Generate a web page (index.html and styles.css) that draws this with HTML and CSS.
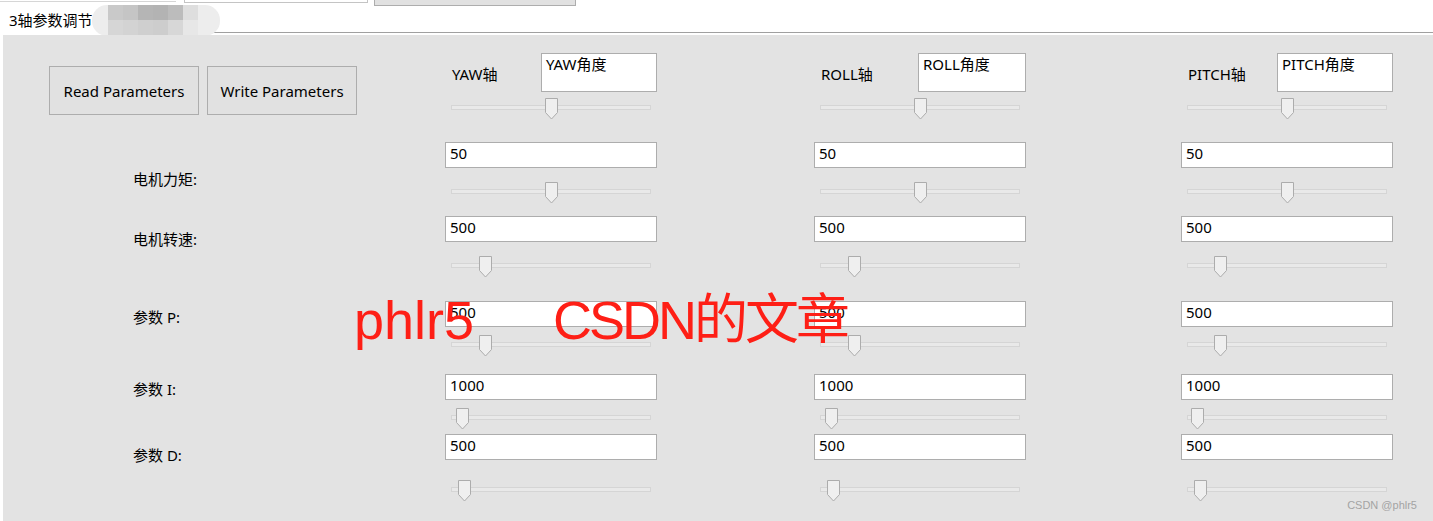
FILE: index.html
```html
<!DOCTYPE html>
<html lang="zh">
<head>
<meta charset="utf-8">
<title>3轴参数调节</title>
<link rel="stylesheet" href="styles.css">
</head>
<body>
<div class="top">
  <div class="strip"><div class="s1"></div><div class="s2"></div><div class="s3"></div></div>
  <div class="tabrow">
    <div class="tab">3轴参数调节</div>
    <div class="tabfill"></div>
  </div>
  <div class="blur">
    <div class="mcol"><i class="c a1"></i><i class="c b1"></i></div>
    <div class="mcol"><i class="c a2"></i><i class="c b2"></i></div>
    <div class="mcol"><i class="c a3"></i><i class="c b3"></i></div>
    <div class="mcol"><i class="c a4"></i><i class="c b4"></i></div>
    <div class="mcol"><i class="c a5"></i><i class="c b5"></i></div>
    <div class="mcol"><i class="c a6"></i><i class="c b6"></i></div>
  </div>
</div>

<div class="panel">
  <div class="leftcol">
    <div class="btns">
      <button class="btn">Read Parameters</button>
      <button class="btn">Write Parameters</button>
    </div>
    <div class="lbl l1">电机力矩:</div>
    <div class="lbl l2">电机转速:</div>
    <div class="lbl l3">参数 P:</div>
    <div class="lbl l4">参数 I:</div>
    <div class="lbl l5">参数 D:</div>
  </div>

  <div class="axis yaw">
    <div class="head"><span class="axlbl">YAW轴</span><div class="angle">YAW角度</div></div>
    <div class="slider r0"><div class="track"></div><svg class="thumb" style="left:100px" viewBox="0 0 13 22"><path d="M0.5 0.5H12.5V14.5L6.5 21L0.5 14.5Z"/></svg></div>
    <div class="tb t1">50</div>
    <div class="slider r1"><div class="track"></div><svg class="thumb" style="left:100px" viewBox="0 0 13 22"><path d="M0.5 0.5H12.5V14.5L6.5 21L0.5 14.5Z"/></svg></div>
    <div class="tb t2">500</div>
    <div class="slider r2"><div class="track"></div><svg class="thumb" style="left:34px" viewBox="0 0 13 22"><path d="M0.5 0.5H12.5V14.5L6.5 21L0.5 14.5Z"/></svg></div>
    <div class="tb t3">500</div>
    <div class="slider r3"><div class="track"></div><svg class="thumb" style="left:34px" viewBox="0 0 13 22"><path d="M0.5 0.5H12.5V14.5L6.5 21L0.5 14.5Z"/></svg></div>
    <div class="tb t4">1000</div>
    <div class="slider r4"><div class="track"></div><svg class="thumb" style="left:11px" viewBox="0 0 13 22"><path d="M0.5 0.5H12.5V14.5L6.5 21L0.5 14.5Z"/></svg></div>
    <div class="tb t5">500</div>
    <div class="slider r5"><div class="track"></div><svg class="thumb" style="left:13px" viewBox="0 0 13 22"><path d="M0.5 0.5H12.5V14.5L6.5 21L0.5 14.5Z"/></svg></div>
  </div>

  <div class="axis roll">
    <div class="head"><span class="axlbl">ROLL轴</span><div class="angle narrow">ROLL角度</div></div>
    <div class="slider r0"><div class="track"></div><svg class="thumb" style="left:100px" viewBox="0 0 13 22"><path d="M0.5 0.5H12.5V14.5L6.5 21L0.5 14.5Z"/></svg></div>
    <div class="tb t1">50</div>
    <div class="slider r1"><div class="track"></div><svg class="thumb" style="left:100px" viewBox="0 0 13 22"><path d="M0.5 0.5H12.5V14.5L6.5 21L0.5 14.5Z"/></svg></div>
    <div class="tb t2">500</div>
    <div class="slider r2"><div class="track"></div><svg class="thumb" style="left:34px" viewBox="0 0 13 22"><path d="M0.5 0.5H12.5V14.5L6.5 21L0.5 14.5Z"/></svg></div>
    <div class="tb t3">500</div>
    <div class="slider r3"><div class="track"></div><svg class="thumb" style="left:34px" viewBox="0 0 13 22"><path d="M0.5 0.5H12.5V14.5L6.5 21L0.5 14.5Z"/></svg></div>
    <div class="tb t4">1000</div>
    <div class="slider r4"><div class="track"></div><svg class="thumb" style="left:11px" viewBox="0 0 13 22"><path d="M0.5 0.5H12.5V14.5L6.5 21L0.5 14.5Z"/></svg></div>
    <div class="tb t5">500</div>
    <div class="slider r5"><div class="track"></div><svg class="thumb" style="left:13px" viewBox="0 0 13 22"><path d="M0.5 0.5H12.5V14.5L6.5 21L0.5 14.5Z"/></svg></div>
  </div>

  <div class="axis pitch">
    <div class="head"><span class="axlbl">PITCH轴</span><div class="angle">PITCH角度</div></div>
    <div class="slider r0"><div class="track"></div><svg class="thumb" style="left:100px" viewBox="0 0 13 22"><path d="M0.5 0.5H12.5V14.5L6.5 21L0.5 14.5Z"/></svg></div>
    <div class="tb t1">50</div>
    <div class="slider r1"><div class="track"></div><svg class="thumb" style="left:100px" viewBox="0 0 13 22"><path d="M0.5 0.5H12.5V14.5L6.5 21L0.5 14.5Z"/></svg></div>
    <div class="tb t2">500</div>
    <div class="slider r2"><div class="track"></div><svg class="thumb" style="left:33px" viewBox="0 0 13 22"><path d="M0.5 0.5H12.5V14.5L6.5 21L0.5 14.5Z"/></svg></div>
    <div class="tb t3">500</div>
    <div class="slider r3"><div class="track"></div><svg class="thumb" style="left:33px" viewBox="0 0 13 22"><path d="M0.5 0.5H12.5V14.5L6.5 21L0.5 14.5Z"/></svg></div>
    <div class="tb t4">1000</div>
    <div class="slider r4"><div class="track"></div><svg class="thumb" style="left:10px" viewBox="0 0 13 22"><path d="M0.5 0.5H12.5V14.5L6.5 21L0.5 14.5Z"/></svg></div>
    <div class="tb t5">500</div>
    <div class="slider r5"><div class="track"></div><svg class="thumb" style="left:13px" viewBox="0 0 13 22"><path d="M0.5 0.5H12.5V14.5L6.5 21L0.5 14.5Z"/></svg></div>
  </div>

  <div class="promo"><span class="pa">phlr5</span><span class="pb">CSDN的文章</span></div>
  <div class="csdn">CSDN @phlr5</div>
</div>
</body>
</html>
```

FILE: styles.css
```css
html, body {
  margin: 0;
  padding: 0;
}
body {
  width: 1433px;
  height: 521px;
  overflow: hidden;
  background: #ffffff;
  font-family: "Noto Sans", "Noto Sans CJK SC", sans-serif;
  font-size: 15px;
  color: #000000;
}

/* ---------- top strip + tab header ---------- */
.top {
  position: relative;
  height: 35px;
}
.strip {
  display: flex;
  align-items: flex-start;
  height: 6px;
}
.s1 {
  width: 176px;
  height: 1px;
  border-bottom: 1px solid #d6d6d6;
}
.s2 {
  margin-left: 8px;
  width: 182px;
  height: 2px;
  background: #ffffff;
  border: 1px solid #c4c4c4;
  border-top: 0;
}
.s3 {
  margin-left: 6px;
  width: 200px;
  height: 5px;
  background: #e1e1e1;
  border: 1px solid #adadad;
  border-top: 0;
}
.tabrow {
  display: flex;
  height: 27px;
}
.tab {
  width: 190px;
  height: 27px;
  box-sizing: border-box;
  padding: 4px 0 0 9px;
  line-height: 20px;
  background: #ffffff;
  white-space: nowrap;
}
.tabfill {
  flex: 1;
  height: 26px;
  border-bottom: 1px solid #a0a0a0;
}
.blur {
  position: absolute;
  left: 92px;
  top: 5px;
  width: 128px;
  height: 31px;
  border-radius: 15px;
  background: #ededed;
  display: flex;
  padding-left: 16px;
  box-sizing: border-box;
}
.mcol {
  display: flex;
  flex-direction: column;
  width: 15px;
}
.c {
  display: block;
  height: 15px;
}
.c + .c { height: 16px; }
.a1 { background: #c9c9c9; } .b1 { background: #d6d6d6; }
.a2 { background: #c5c5c5; } .b2 { background: #d3d3d3; }
.a3 { background: #b5b5b5; } .b3 { background: #cfcfcf; }
.a4 { background: #b3b3b3; } .b4 { background: #cdcdcd; }
.a5 { background: #bcbcbc; } .b5 { background: #d7d7d7; }
.a6 { background: #dedede; } .b6 { background: #e7e7e7; }

/* ---------- panel ---------- */
.panel {
  position: relative;
  margin-left: 3px;
  height: 486px;
  background: #e3e3e3;
  display: flex;
  align-items: flex-start;
}
.leftcol {
  width: 442px;
  display: flex;
  flex-direction: column;
}
.btns {
  display: flex;
  gap: 8px;
  margin: 31px 0 0 46px;
}
.btn {
  width: 150px;
  height: 49px;
  padding: 0;
  border: 1px solid #adadad;
  background: #e1e1e1;
  font: inherit;
  color: #000000;
}
.lbl {
  margin-left: 130px;
  height: 20px;
  line-height: 20px;
  white-space: nowrap;
}
.l1 { margin-top: 54px; }
.l2 { margin-top: 40px; }
.l3 { margin-top: 58px; }
.l4 { margin-top: 52px; }
.l5 { margin-top: 46px; }

.axis {
  width: 212px;
  display: flex;
  flex-direction: column;
}
.roll { margin-left: 157px; }
.pitch { margin-left: 155px; }

.head {
  display: flex;
  justify-content: space-between;
  align-items: center;
  height: 39px;
  margin-top: 18px;
}
.axlbl {
  padding: 3px 0 0 7px;
  line-height: 20px;
  white-space: nowrap;
}
.angle {
  width: 116px;
  height: 39px;
  box-sizing: border-box;
  border: 1px solid #adadad;
  background: #ffffff;
  padding: 0 4px;
  line-height: 20px;
  white-space: nowrap;
}
.angle.narrow { width: 108px; }

.slider {
  position: relative;
  height: 22px;
  box-sizing: border-box;
  padding-top: 7px;
}
.track {
  margin: 0 6px;
  height: 5px;
  box-sizing: border-box;
  border: 1px solid #d5d5d5;
  background: #e9e9e9;
}
.thumb {
  position: absolute;
  top: 0;
  width: 13px;
  height: 22px;
  fill: #efefef;
  stroke: #acacac;
  stroke-width: 1;
}
.r0 { margin-top: 6px; }
.r1 { margin-top: 14px; }
.r2 { margin-top: 14px; }
.r3 { margin-top: 8px; }
.r4 { margin-top: 8px; }
.r5 { margin-top: 20px; }

.tb {
  height: 26px;
  box-sizing: border-box;
  border: 1px solid #adadad;
  background: #ffffff;
  padding-left: 4px;
  line-height: 20px;
}
.t1 { margin-top: 22px; }
.t2 { margin-top: 12px; }
.t3 { margin-top: 23px; }
.t4 { margin-top: 17px; }
.t5 { margin-top: 4px; }

/* ---------- overlays ---------- */
.promo {
  position: absolute;
  left: 351px;
  top: 258px;
  font-family: "Liberation Sans", "Noto Sans CJK SC", sans-serif;
  font-size: 54px;
  line-height: 54px;
  color: #fe1f16;
  white-space: nowrap;
}
.pb {
  margin-left: 79px;
  letter-spacing: -3px;
}
.csdn {
  position: absolute;
  right: 16px;
  top: 465px;
  font-family: "Liberation Sans", sans-serif;
  font-size: 11px;
  line-height: 11px;
  color: #a3a3a3;
}
```
